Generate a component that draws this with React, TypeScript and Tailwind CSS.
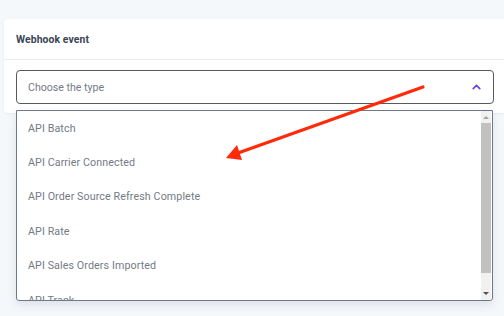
import React from "react";

const items = [
  "API Batch",
  "API Carrier Connected",
  "API Order Source Refresh Complete",
  "API Rate",
  "API Sales Orders Imported",
  "API Track",
];

export default function App() {
  return (
    <div
      className="w-[504px] h-[316px] overflow-hidden bg-[#f5f8fb] pt-[19px] pl-[4px] relative"
      style={{ fontFamily: "Roboto, 'Liberation Sans', sans-serif" }}
    >
      <div className="w-[520px] bg-white rounded-[4px] shadow-[0_1px_3px_rgba(0,0,0,0.06)]">
        <div className="h-[41px] flex items-center pl-[12px] pt-[2px] border-b border-[#e8ebef]">
          <span className="text-[10.4px] font-bold text-[#3a4556] tracking-[0.1px]">Webhook event</span>
        </div>
        <div className="pl-[12px] pt-[10px] pb-[9px]">
          <div className="w-[478px] h-[34px] border border-[#555a60] rounded-[4px] flex items-center justify-between pl-[11px] pr-[12px]">
            <span className="text-[10.6px] text-[#737b86] pt-[2px]">Choose the type</span>
            <svg width="9" height="6" viewBox="0 0 9 6">
              <path d="M1.2 4.6 L4.5 1.4 L7.8 4.6" stroke="#6d3fd8" strokeWidth="1.6" fill="none" strokeLinecap="round" strokeLinejoin="round" />
            </svg>
          </div>
        </div>
      </div>

      <div className="absolute left-[16px] top-[110px] w-[477px] h-[191px] bg-white border border-[#6d7a8c] rounded-b-[3px] shadow-[0_4px_10px_rgba(60,70,90,0.12)] flex overflow-hidden">
        <div className="flex-1 overflow-hidden">
          {items.map((t) => (
            <div key={t} className="h-[34.4px] shrink-0 flex items-center pl-[11px] pt-[1px] text-[10.7px] text-[#737b86] tracking-[0.1px]">
              {t}
            </div>
          ))}
        </div>
        <div className="w-[10px] mr-[1px] bg-[#f1f1f1] flex flex-col items-center">
          <div className="h-[12px] flex items-center justify-center">
            <div className="w-0 h-0 border-l-[3px] border-r-[3px] border-b-[3px] border-l-transparent border-r-transparent border-b-[#a3a3a3]" />
          </div>
          <div className="w-[10px] h-[150px] bg-[#c1c1c1]" />
          <div className="flex-1" />
          <div className="h-[14px] flex items-center justify-center">
            <div className="w-0 h-0 border-l-[3px] border-r-[3px] border-t-[3px] border-l-transparent border-r-transparent border-t-[#505050]" />
          </div>
        </div>
      </div>

      <svg className="absolute left-0 top-0 pointer-events-none" width="504" height="316">
        <line x1="423" y1="87" x2="238" y2="153" stroke="#ff2a0a" strokeWidth="3.2" strokeLinecap="round" />
        <polygon points="226,158 237,145 242,160" fill="#ff2a0a" />
      </svg>
    </div>
  );
}
